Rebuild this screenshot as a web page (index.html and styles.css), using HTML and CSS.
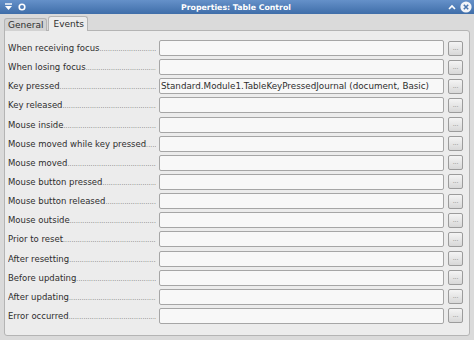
FILE: index.html
```html
<!DOCTYPE html>
<html lang="en">
<head>
  <meta charset="UTF-8">
  <title>Properties: Table Control</title>
  <link rel="stylesheet" href="styles.css">
</head>
<body>
  <div class="window">
    <!-- Title bar -->
    <div class="titlebar">
      <div class="tb-left">
        <svg width="9" height="8" viewBox="0 0 9 8"><path d="M1 1h7" stroke="#fff" stroke-width="1.4"/><path d="M1 3h7L4.5 7z" fill="#fff"/></svg>
        <svg width="8" height="8" viewBox="0 0 8 8"><circle cx="4" cy="4" r="2.8" fill="none" stroke="#fff" stroke-width="1.6"/></svg>
      </div>
      <div class="title">Properties: Table Control</div>
      <div class="tb-right">
        <svg width="8" height="6" viewBox="0 0 8 6"><path d="M1 5l3-3 3 3" fill="none" stroke="#fff" stroke-width="1.6"/></svg>
        <svg width="12" height="12" viewBox="0 0 12 12"><circle cx="6" cy="6" r="5.6" fill="#f2f4f8"/><path d="M3.8 3.8l4.4 4.4M8.2 3.8l-4.4 4.4" stroke="#4a77b0" stroke-width="1.6"/></svg>
      </div>
    </div>

    <!-- Tabs -->
    <div class="tabs">
      <div class="tab">General</div>
      <div class="tab active">Events</div>
    </div>

    <!-- Events panel -->
    <div class="panel">
      <div class="row"><span class="label">When receiving focus</span><div class="field"></div><div class="btn">...</div></div>
      <div class="row"><span class="label">When losing focus</span><div class="field"></div><div class="btn">...</div></div>
      <div class="row"><span class="label">Key pressed</span><div class="field">Standard.Module1.TableKeyPressedJournal (document, Basic)</div><div class="btn">...</div></div>
      <div class="row"><span class="label">Key released</span><div class="field"></div><div class="btn">...</div></div>
      <div class="row"><span class="label">Mouse inside</span><div class="field"></div><div class="btn">...</div></div>
      <div class="row"><span class="label">Mouse moved while key pressed</span><div class="field"></div><div class="btn">...</div></div>
      <div class="row"><span class="label">Mouse moved</span><div class="field"></div><div class="btn">...</div></div>
      <div class="row"><span class="label">Mouse button pressed</span><div class="field"></div><div class="btn">...</div></div>
      <div class="row"><span class="label">Mouse button released</span><div class="field"></div><div class="btn">...</div></div>
      <div class="row"><span class="label">Mouse outside</span><div class="field"></div><div class="btn">...</div></div>
      <div class="row"><span class="label">Prior to reset</span><div class="field"></div><div class="btn">...</div></div>
      <div class="row"><span class="label">After resetting</span><div class="field"></div><div class="btn">...</div></div>
      <div class="row"><span class="label">Before updating</span><div class="field"></div><div class="btn">...</div></div>
      <div class="row"><span class="label">After updating</span><div class="field"></div><div class="btn">...</div></div>
      <div class="row"><span class="label">Error occurred</span><div class="field"></div><div class="btn">...</div></div>
    </div>
  </div>
</body>
</html>
```

FILE: styles.css
```css
/* General */
body {
  margin: 0;
  padding: 0;
  font-family: "DejaVu Sans", sans-serif;
  font-size: 8px;
  color: #2e2e2e;
  background: #dadada;
}

.window {
  width: 474px;
  height: 340px;
  overflow: hidden;
  background: #dadada;
}

/* Title bar */
.titlebar {
  height: 14px;
  display: flex;
  align-items: center;
  padding: 0 2px 0 4px;
  background: linear-gradient(#6591c9, #3f6ea9);
  color: #fff;
}

.tb-left,
.tb-right {
  display: flex;
  align-items: center;
  gap: 5px;
  width: 40px;
}

.tb-right {
  justify-content: flex-end;
  gap: 4px;
}

.title {
  flex: 1;
  text-align: center;
  font-weight: bold;
  font-size: 7.8px;
  padding-right: 4px;
}

/* Tabs */
.tabs {
  display: flex;
  align-items: flex-end;
  height: 17px;
  padding-left: 4px;
  margin-bottom: -1px;
  position: relative;
}

.tab {
  height: 12px;
  line-height: 13px;
  padding: 0 3px;
  border: 1px solid #b4b4b4;
  border-bottom: none;
  border-radius: 3px 3px 0 0;
  background: #d2d2d2;
  font-size: 9px;
}

.tab.active {
  height: 14px;
  line-height: 15px;
  padding: 0 3px 0 4px;
  background: #ececec;
  margin-left: 1px;
}

/* Panel */
.panel {
  margin: 0 4px;
  height: 295px;
  padding: 9px 6px 0 3px;
  border: 1px solid #b4b4b4;
  border-radius: 0 3px 3px 3px;
  background: #ececec;
}

.row {
  display: flex;
  align-items: center;
  height: 16px;
  margin-bottom: 3.15px;
}

.label {
  width: 148px;
  margin-right: 3px;
  white-space: nowrap;
  overflow: hidden;
  font-size: 8.5px;
}

.label::after {
  content: "..........................................................................................";
  color: #555;
  font-size: 6px;
  letter-spacing: 0.2px;
}

.field {
  flex: 1;
  height: 14px;
  line-height: 14px;
  padding: 0 1px;
  border: 1px solid #a6a6a6;
  border-radius: 2px;
  background: #f8f8f8;
  font-size: 8.75px;
  white-space: nowrap;
  overflow: hidden;
}

.btn {
  width: 13px;
  height: 13px;
  margin-left: 4px;
  border: 1px solid #9c9c9c;
  border-radius: 2px;
  background: linear-gradient(#f4f4f4, #d8d8d8);
  color: #777;
  font-size: 6px;
  line-height: 11px;
  text-align: center;
}
```
